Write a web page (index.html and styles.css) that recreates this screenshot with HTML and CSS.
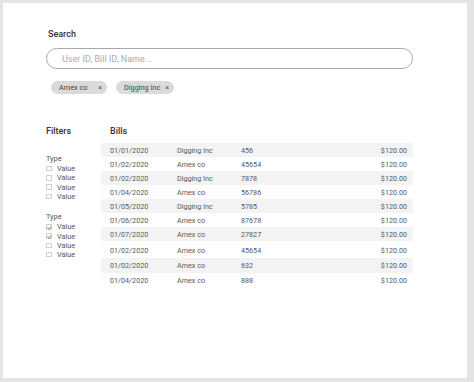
FILE: index.html
```html
<!DOCTYPE html>
<html lang="en">
<head>
<meta charset="utf-8">
<title>Bills</title>
<meta name="viewport" content="width=device-width,initial-scale=1">
<link rel="stylesheet" href="styles.css">
</head>
<body>
<div class="panel">

  <!-- Search -->
  <label class="search-label" for="q">Search</label>
  <input type="text" id="q" class="search-input" placeholder="User ID, Bill ID, Name...">
  <div class="chips">
    <span class="chip">Amex co <span class="x">×</span></span>
    <span class="chip">Digging Inc <span class="x">×</span></span>
  </div>

  <div class="content">
    <!-- Filters -->
    <aside class="filters">
      <h2>Filters</h2>
      <div class="group">
        <h3>Type</h3>
        <ul>
          <li><span class="box"></span>Value</li>
          <li><span class="box"></span>Value</li>
          <li><span class="box"></span>Value</li>
          <li><span class="box"></span>Value</li>
        </ul>
      </div>
      <div class="group">
        <h3>Type</h3>
        <ul>
          <li><span class="box on"></span>Value</li>
          <li><span class="box on"></span>Value</li>
          <li><span class="box"></span>Value</li>
          <li><span class="box"></span>Value</li>
        </ul>
      </div>
    </aside>

    <!-- Bills -->
    <section class="bills">
      <h2>Bills</h2>
      <div class="rows">
        <div class="bill"><span>01/01/2020</span><span>Digging Inc</span><span>456</span><span class="amt">$120.00</span></div>
        <div class="bill"><span>01/02/2020</span><span>Amex co</span><span>45654</span><span class="amt">$120.00</span></div>
        <div class="bill"><span>01/02/2020</span><span>Digging Inc</span><span>7878</span><span class="amt">$120.00</span></div>
        <div class="bill"><span>01/04/2020</span><span>Amex co</span><span>56786</span><span class="amt">$120.00</span></div>
        <div class="bill"><span>01/05/2020</span><span>Digging Inc</span><span>5785</span><span class="amt">$120.00</span></div>
        <div class="bill"><span>01/06/2020</span><span>Amex co</span><span>87678</span><span class="amt">$120.00</span></div>
        <div class="bill"><span>01/07/2020</span><span>Amex co</span><span>27827</span><span class="amt">$120.00</span></div>
        <div class="bill"><span>01/02/2020</span><span>Amex co</span><span>45654</span><span class="amt">$120.00</span></div>
        <div class="bill"><span>01/02/2020</span><span>Amex co</span><span>632</span><span class="amt">$120.00</span></div>
        <div class="bill"><span>01/04/2020</span><span>Amex co</span><span>888</span><span class="amt">$120.00</span></div>
      </div>
    </section>
  </div>

</div>
</body>
</html>
```

FILE: styles.css
```css
:root { --ink:#333; --muted:#595959; --line:#a8a8a8; --stripe:#f3f3f3 }
*      { box-sizing:border-box }
html,body { height:100% }
body   { margin:0; padding:3px 7px 4px 3px; background:#e4e4e4; font-family:Roboto, "Liberation Sans", sans-serif; color:var(--ink) }
.panel { height:100%; background:#fff; padding:25px 54px 0 43px }

.search-label { display:block; margin-left:2px; font-size:9px; line-height:12px; font-weight:500 }
.search-input { display:block; width:100%; height:21px; margin-top:8px; padding:0 0 0 15px; border:1.3px solid var(--line); border-radius:11px;
                font:9px Roboto, sans-serif; color:var(--ink); outline:none }
.search-input::placeholder { color:#ababab }

.chips { display:flex; gap:9px; margin:12px 0 0 5px }
.chip  { display:flex; align-items:center; justify-content:space-between; gap:5px; min-width:56px; height:13px; padding:0 5px 0 8px;
         background:#dadada; border-radius:7px; font-size:7.3px; color:#444 }
.chip .x { font-size:7px; color:#555 }

.content { display:flex; margin-top:31px }
h2     { margin:0; font-size:9px; line-height:12px; font-weight:500 }
h3     { margin:0 0 1px; font-size:7.3px; line-height:9px; font-weight:400; color:#555 }

.filters { width:55px; flex:none }
.filters h2 { margin-bottom:17px }
.group + .group { margin-top:11px }
.group ul { list-style:none; margin:0; padding:0 }
.group li { display:flex; align-items:center; height:9.3px; font-size:7.3px; color:var(--muted) }
.box   { position:relative; width:5.5px; height:5.5px; margin-right:5.5px; border:1px solid #cfcfcf; flex:none }
.box.on::after { content:""; position:absolute; left:1px; top:-0.5px; width:1.5px; height:3px; border:solid #999; border-width:0 1px 1px 0; transform:rotate(40deg) }

.bills { flex:1 }
.bills h2 { margin-left:9px; margin-bottom:6px }
.bill  { display:grid; grid-template-columns:67px 64px 1fr auto; align-items:center; height:14px; padding:0 6px 0 9px;
         font-size:7.2px; color:var(--muted) }
.bill:nth-child(odd) { background:var(--stripe) }
.bill:nth-child(n+8) { height:15px }
.bill:nth-child(8) { margin-top:1.5px }
.amt   { text-align:right }
```
